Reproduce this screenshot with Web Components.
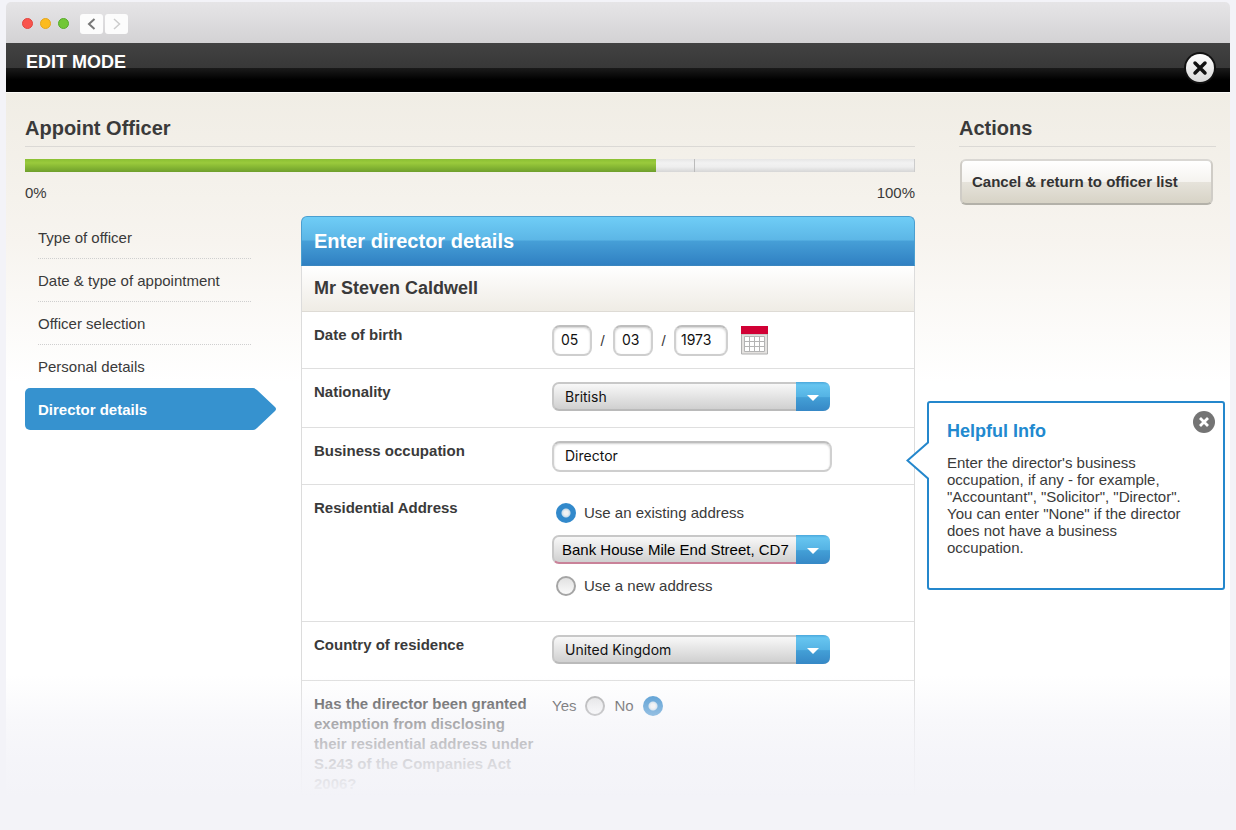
<!DOCTYPE html>
<html lang="en">
<head>
<meta charset="utf-8">
<title>Appoint Officer</title>
<style>
  body { margin: 0; background: #f3f3f8; color: #3a3a3a; font: 15px/20px "Liberation Sans", Arial, sans-serif; }
</style>
</head>
<body>
<app-window>
  <mode-bar>EDIT MODE</mode-bar>
  <page-columns>
    <section-title>Appoint Officer</section-title>
    <progress-meter value="71"></progress-meter>
    <wizard-layout>
      <step-nav slot="nav"></step-nav>
      <director-form></director-form>
    </wizard-layout>
    <section-title slot="side">Actions</section-title>
    <action-button slot="side">Cancel &amp; return to officer list</action-button>
  </page-columns>
</app-window>

<script>
const define = (name, html) => {
  const template = document.createElement('template');
  template.innerHTML = html;
  customElements.define(name, class extends HTMLElement {
    constructor() {
      super();
      this.attachShadow({ mode: 'open' }).append(template.content.cloneNode(true));
    }
  });
};

define('app-window', `
<style>
  :host { display: block; position: relative; margin: 2px 6px 0; }
  .bar { box-sizing: border-box; display: flex; align-items: center; height: 41px; padding: 2px 16px 0; border-radius: 5px 5px 0 0; background: linear-gradient(#e6e5e7, #d3d2d4); }
  .lights { display: flex; gap: 7px; margin-right: 11px; }
  .lights i { width: 11px; height: 11px; border-radius: 50%; box-sizing: border-box; }
  .red { background: #f9544d; border: 1px solid #e2453f; }
  .amber { background: #fcbb20; border: 1px solid #e5a61c; }
  .green { background: #72c736; border: 1px solid #57ab2b; }
  .nav { display: flex; gap: 2px; }
  button { width: 23px; height: 20px; padding: 0; border: 0; border-radius: 3px; background: #fcfcfc; color: #777; }
  button:last-child { color: #ccc; }
  svg { display: block; margin: auto; }
  .page { background: #fff linear-gradient(#f0ede5, #f7f4ef 150px, #fff 290px) no-repeat 0 49px; }
  .fade { position: absolute; inset: auto 0 0; height: 120px; pointer-events: none;
    background: linear-gradient(rgba(243,243,248,0), rgba(243,243,248,.35) 28px, rgba(243,243,248,.6) 48px, rgba(243,243,248,.74) 68px, rgba(243,243,248,.86) 88px, rgba(243,243,248,.93) 108px, #f3f3f8); }
</style>
<div class="bar">
  <div class="lights"><i class="red"></i><i class="amber"></i><i class="green"></i></div>
  <div class="nav">
    <button aria-label="Back"><svg width="9" height="12" viewBox="0 0 9 12" fill="none" stroke="currentColor" stroke-width="2"><path d="M7.500 1 2 6l5.500 5"/></svg></button>
    <button aria-label="Forward"><svg width="9" height="12" viewBox="0 0 9 12" fill="none" stroke="currentColor" stroke-width="1.500"><path d="m2 1 5.500 5L2 11"/></svg></button>
  </div>
</div>
<div class="page"><slot></slot></div>
<div class="fade"></div>`);

define('mode-bar', `
<style>
  :host { display: flex; justify-content: space-between; align-items: flex-start; padding: 9px 14px 8px 20px; color: #fff; background: linear-gradient(#424242, #383838 50%, #1c1c1c 50%, #000 75%); border-bottom: 1px solid #fbfaf7; }
  h1 { margin: 0; font-size: 18px; line-height: 20px; }
  button { width: 32px; height: 32px; padding: 0; border: 0; background: none; }
  svg { display: block; }
</style>
<h1><slot></slot></h1>
<button aria-label="Close edit mode">
  <svg width="32" height="32" viewBox="0 0 32 32">
    <defs><linearGradient id="g" x2="0" y2="1"><stop stop-color="#fff"/><stop offset="1" stop-color="#d8d8d8"/></linearGradient></defs>
    <circle cx="16" cy="16" r="16" fill="#111"/><circle cx="16" cy="16" r="14" fill="url(#g)"/>
    <path d="m11 11 10 10m0-10L11 21" stroke="#111" stroke-width="3.500" stroke-linecap="round"/>
  </svg>
</button>`);

define('page-columns', `
<style>
  :host { display: grid; grid-template-columns: minmax(0, 1fr) 257px; gap: 44px; padding: 23px 14px 0 19px; }
</style>
<main><slot></slot></main>
<aside><slot name="side"></slot></aside>`);

define('section-title', `
<style>
  :host { display: block; padding-bottom: 6px; border-bottom: 1px solid #dbd9d5; margin-bottom: 12px; }
  h2 { margin: 0; font-size: 20px; line-height: 24px; }
</style>
<h2><slot></slot></h2>`);

define('action-button', `
<style>
  :host { display: block; margin: 0 3px 0 1px; }
  button { box-sizing: border-box; width: 100%; height: 46px; padding: 0 10px; text-align: left; font: bold 15px/20px "Liberation Sans", Arial, sans-serif; color: #333;
    border: 2px solid; border-color: #d9d7d3 #cfccc6 #b3b1a9; border-radius: 6px; background: linear-gradient(#fff, #f5f3ef 50%, #e6e3db 50%, #d7d3c6); }
</style>
<button><slot></slot></button>`);

define('progress-meter', `
<style>
  :host { display: block; margin-bottom: 13px; }
  progress { display: block; appearance: none; width: 100%; height: 13px; margin-bottom: 11px; border: 0; }
  progress::-webkit-progress-bar { background: linear-gradient(#bbb, #bbb) 75.3% 0 / 1px 100% no-repeat, linear-gradient(#e6e6e6, #f2f2f2 30%, #eee 60%, #d6d6d6); border-right: 1px solid #ccc; }
  progress::-webkit-progress-value { background: linear-gradient(#8bc034, #9aca3c 30%, #8abb35 55%, #6f9f2c); }
  div { display: flex; justify-content: space-between; }
</style>
<progress value="71" max="100" aria-label="Progress"></progress>
<div><span>0%</span><span>100%</span></div>`);

define('wizard-layout', `
<style>
  :host { display: grid; grid-template-columns: 251px minmax(0, 1fr); gap: 25px; }
</style>
<slot name="nav"></slot><slot></slot>`);

define('step-nav', `
<style>
  :host { display: block; }
  ul { margin: 0; padding: 0; list-style: none; }
  li { box-sizing: border-box; height: 43px; margin: 0 25px 0 13px; border-bottom: 1px dotted #cfcfcf; }
  a { display: block; line-height: 43px; color: inherit; text-decoration: none; }
  li:nth-last-child(-n+2) { border: 0; }
  .active { display: flex; margin: 0; color: #fff; font-weight: bold; }
  .active a { flex: 1; padding-left: 13px; height: 42px; background: #3692cf; border-radius: 5px 0 0 5px; }
  svg { display: block; }
</style>
<nav aria-label="Steps"><ul>
  <li><a href="#type">Type of officer</a></li>
  <li><a href="#date">Date &amp; type of appointment</a></li>
  <li><a href="#selection">Officer selection</a></li>
  <li><a href="#personal">Personal details</a></li>
  <li class="active"><a href="#director" aria-current="step">Director details</a><svg width="24" height="42" viewBox="0 0 24 42"><path d="M0 0h1q2 0 4 2l18 17q2 2 0 4L5 40q-2 2-4 2H0z" fill="#3692cf"/></svg></li>
</ul></nav>`);

define('form-row', `
<style>
  :host { display: grid; grid-template-columns: 226px minmax(0, 1fr); column-gap: 12px; position: relative; padding: 13px 12px 12px; border-bottom: 1px solid #dfdfdf; }
  :host(:last-child) { border: 0; padding-bottom: 0; }
  .label { font-weight: bold; }
</style>
<div class="label"><slot name="label"></slot></div>
<div><slot></slot></div>
<slot name="help"></slot>`);

define('select-box', `
<style>
  :host { display: block; position: relative; width: 278px; height: 29px; }
  ::slotted(select) { appearance: none; box-sizing: border-box; display: block; width: 100%; height: 29px; margin: 0; padding: 0 34px 0 11px; border: 2px solid; border-color: #c8c8c8 #c8c8c8 #bababa; border-radius: 7px; color: #111; background: linear-gradient(#f8f8f8, #e6e6e6 45%, #d0d0d0); font: 14px/20px Inter, sans-serif; }
  :host([address]) ::slotted(select) { padding-left: 8px; border-bottom-color: #c98299; font: 15px/20px "Liberation Sans", Arial, sans-serif; color: #000; }
  svg { position: absolute; top: 0; right: 0; pointer-events: none; }
</style>
<slot></slot>
<svg width="34" height="29" viewBox="0 0 34 29">
  <defs><linearGradient id="b" x2="0" y2="1"><stop stop-color="#4aa8dc"/><stop offset=".1" stop-color="#66c5f0"/><stop offset=".5" stop-color="#55b3e4"/><stop offset=".54" stop-color="#439fd6"/><stop offset="1" stop-color="#3688c6"/></linearGradient></defs>
  <path d="M0 0h27q7 0 7 7v15q0 7-7 7H0z" fill="url(#b)"/><path d="M11 13h12l-6 6z" fill="#fff"/>
</svg>`);

define('help-box', `
<style>
  :host { display: block; position: absolute; left: calc(100% + 13px); top: -27px; box-sizing: border-box; width: 298px; padding: 18px 38px 32px 18px; border: 2px solid #2487cc; border-radius: 3px; background: #fff; }
  h3 { margin: 0 0 13px; color: #2189cf; font-size: 18px; line-height: 20px; }
  p { margin: 0; line-height: 17px; }
  .arrow { position: absolute; left: -23px; top: 37px; }
  button { position: absolute; top: 8px; right: 8px; width: 22px; height: 22px; padding: 0; border: 0; background: none; }
  svg { display: block; }
</style>
<svg class="arrow" width="24" height="42" viewBox="0 0 24 42"><path d="M24 2.500 22 2.500 1.500 20.500 22 38.500h2z" fill="#fff"/><path d="M22 1.500v1L1.500 20.500l20.500 18v1" fill="none" stroke="#2487cc" stroke-width="2"/></svg>
<h3><slot name="title"></slot></h3>
<p><slot></slot></p>
<button aria-label="Close help"><svg width="22" height="22" viewBox="0 0 22 22"><circle cx="11" cy="11" r="11" fill="#747474"/><path d="m7 7 8 8m0-8-8 8" stroke="#fff" stroke-width="2.800"/></svg></button>`);

define('director-form', `
<style>
  :host { display: block; }
  h2 { box-sizing: border-box; height: 50px; margin: 0; padding: 0 12px; font-size: 20px; line-height: 48px; color: #fff; border: 1px solid; border-color: #4b9fd0 #4b9fd0 #3a86bf; border-radius: 6px 6px 0 0; background: linear-gradient(#6fcdf6, #5cb6e6 48%, #469fd7 50%, #3080c2); }
  .card { border: 1px solid #dcdcdc; border-top: 0; background: #fff; }
  h3 { margin: 0; padding: 0 12px; font-size: 18px; line-height: 45px; border-bottom: 1px solid #dedbd5; background: linear-gradient(#fff, #efece5); }
  input[type=text] { box-sizing: border-box; height: 31px; margin: 0; padding: 0 11px 2px; border: 2px solid; border-color: #bebebe #d0d0d0 #cecece; border-radius: 8px; background: #fff; box-shadow: inset 0 1px 2px #d0d0d0; font: 14px/20px Inter, sans-serif; color: #111; }
  .date { display: flex; align-items: center; }
  .date input[type=text] { width: 40px; padding: 0 7px 2px; }
  .date input.year { width: 54px; padding: 0 5px 2px; }
  .date span { width: 21px; text-align: center; }
  .date button { margin: 0 0 0 13px; padding: 0; border: 0; background: none; }
  svg { display: block; }
  #job { display: block; width: 280px; }
  select-box.field { margin-bottom: 4px; }
  input[type=radio] { appearance: none; box-sizing: border-box; width: 20px; height: 20px; margin: 0; border: 2px solid #a5a5a5; border-radius: 50%; background: linear-gradient(#e2e2e2, #fafafa); }
  input[type=radio]:checked { border: 0; background: radial-gradient(circle at 50% 50%, #f2f2f2 2px, #c9dcea 4px, #3289cb 5px); }
  fieldset { margin: 0; padding: 0; border: 0; min-width: 0; }
  .address { display: flex; flex-direction: column; gap: 12px; padding: 5px 0 13px; }
  .choice { display: flex; align-items: center; gap: 8px; padding-left: 4px; }
  .yesno { display: flex; align-items: center; gap: 9px; padding-top: 2px; }
</style>
<h2>Enter director details</h2>
<form class="card">
  <h3>Mr Steven Caldwell</h3>
  <form-row>
    <label slot="label" for="day">Date of birth</label>
    <div class="date">
      <input type="text" id="day" value="05"><span>/</span><input type="text" aria-label="Month" value="03"><span>/</span><input type="text" class="year" aria-label="Year" value="1973">
      <button type="button" aria-label="Choose date"><svg width="28" height="29" viewBox="0 0 28 29">
        <path d="M.5 8h26v20H.5z" fill="#e4e2e0" stroke="#b0b0b0"/><path d="M0 0h27v8H0z" fill="#d10035"/>
        <path d="M4 11h20v15H4z" fill="#fff"/><path d="M3.500 10.500h20v15h-20zM3.500 15.500h20M3.500 20.500h20M8.500 10.500v15M13.500 10.500v15M18.500 10.500v15" fill="none" stroke="#b4b4b4"/>
      </svg></button>
    </div>
  </form-row>
  <form-row>
    <label slot="label" for="nation">Nationality</label>
    <select-box class="field"><select id="nation"><option>British</option></select></select-box>
  </form-row>
  <form-row>
    <label slot="label" for="job">Business occupation</label>
    <input type="text" id="job" value="Director">
    <help-box slot="help"><span slot="title">Helpful Info</span>Enter the director's business occupation, if any - for example, "Accountant", "Solicitor", "Director". You can enter "None" if the director does not have a business occupation.</help-box>
  </form-row>
  <form-row>
    <span slot="label" id="res">Residential Address</span>
    <fieldset class="address" aria-labelledby="res">
      <label class="choice"><input type="radio" name="address" checked>Use an existing address</label>
      <select-box address><select aria-label="Existing address"><option>Bank House Mile End Street, CD7</option></select></select-box>
      <label class="choice"><input type="radio" name="address">Use a new address</label>
    </fieldset>
  </form-row>
  <form-row>
    <label slot="label" for="country">Country of residence</label>
    <select-box class="field"><select id="country"><option>United Kingdom</option></select></select-box>
  </form-row>
  <form-row>
    <span slot="label" id="exempt">Has the director been granted exemption from disclosing their residential address under S.243 of the Companies Act 2006?</span>
    <fieldset class="yesno" aria-labelledby="exempt">
      <label for="yes">Yes</label><input type="radio" name="exempt" id="yes"><label for="no">No</label><input type="radio" name="exempt" id="no" checked>
    </fieldset>
  </form-row>
</form>`);
</script>
</body>
</html>
